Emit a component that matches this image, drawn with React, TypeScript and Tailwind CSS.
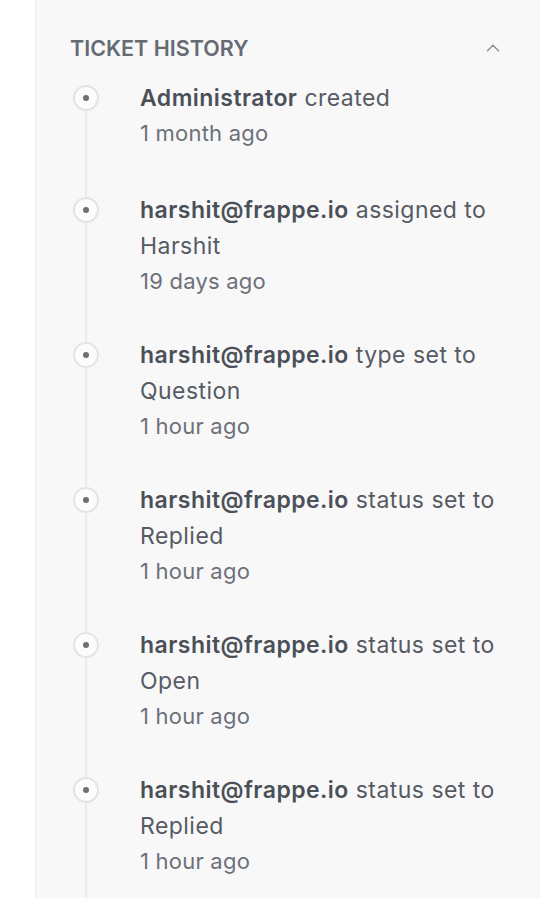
import { ChevronUp } from "lucide-react";

type Entry = { who: string; action: string; when: string };

const entries: Entry[] = [
  { who: "Administrator", action: "created", when: "1 month ago" },
  { who: "harshit@frappe.io", action: "assigned to Harshit", when: "19 days ago" },
  { who: "harshit@frappe.io", action: "type set to Question", when: "1 hour ago" },
  { who: "harshit@frappe.io", action: "status set to Replied", when: "1 hour ago" },
  { who: "harshit@frappe.io", action: "status set to Open", when: "1 hour ago" },
  { who: "harshit@frappe.io", action: "status set to Replied", when: "1 hour ago" },
];

const HistoryItem = ({ entry, first }: { entry: Entry; first: boolean }) => (
  <div className="flex gap-[40px]">
    <div className="flex w-[28px] shrink-0 flex-col items-center">
      <div className={first ? "h-[5px]" : "h-[5px] w-[2px] bg-[#ebebec]"} />
      <div className="flex h-[26px] w-[26px] items-center justify-center rounded-full border-2 border-[#e4e4e6] bg-[#fcfcfc]">
        <div className="h-[6px] w-[6px] rounded-full bg-[#6b6f76]" />
      </div>
      <div className="w-[2px] flex-1 bg-[#ebebec]" />
    </div>
    <div className={first ? "flex-1 pb-[41px]" : "flex-1 pb-[38px]"}>
      <p className="text-[23px] leading-[36px] tracking-[0.02em] text-[#565b63]">
        <span className="font-semibold text-[#4b5058]">{entry.who}</span> {entry.action}
      </p>
      <p className="text-[22px] leading-[35px] tracking-[0.01em] text-[#6c7178]">{entry.when}</p>
    </div>
  </div>
);

export default function App() {
  return (
    <div
      className="flex h-[898px] w-[540px] overflow-hidden bg-white"
      style={{ fontFamily: "Inter, 'Noto Sans', sans-serif" }}
    >
      <div className="w-[36px] shrink-0 border-r border-[#ececed] bg-white" />
      <div className="flex-1 bg-[#f8f8f9] pr-[36px]">
        <div className="flex h-[96px] items-center justify-between pl-[34px]">
          <h2 className="text-[21.5px] font-semibold uppercase text-[#666b73]">Ticket History</h2>
          <ChevronUp className="h-[22px] w-[22px] text-[#8b8f95]" strokeWidth={1.5} />
        </div>
        <div className="-mt-[16px] flex flex-col pl-[36px]">
          {entries.map((e, i) => (
            <HistoryItem key={i} entry={e} first={i === 0} />
          ))}
        </div>
      </div>
    </div>
  );
}
